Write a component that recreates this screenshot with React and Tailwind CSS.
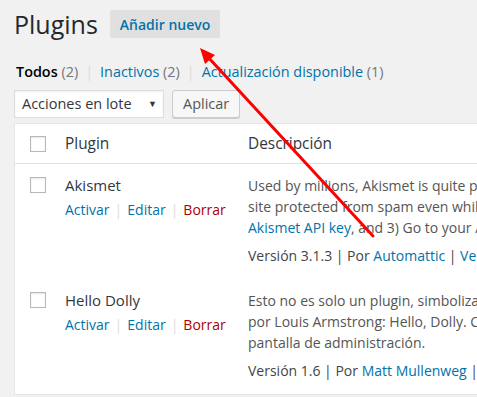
import { useState } from 'react';

const font = { fontFamily: '"Open Sans", "Noto Sans", sans-serif' };

function Checkbox() {
  return <span className="block h-4 w-4 border border-[#b4b9be] bg-white shadow-[inset_0_1px_2px_rgba(0,0,0,0.1)]" />;
}

const Sep = ({ wide }) => <span className={`${wide ? 'mx-[7px]' : 'mx-[5px]'} text-[#ddd]`}>|</span>;

function PluginRow({ name, desc, version, author }) {
  return (
    <div className="flex h-[115px]">
      <div className="w-[50px] shrink-0 pl-[15px] pt-[13px]">
        <Checkbox />
      </div>
      <div className="w-[183px] shrink-0 pt-[11px]">
        <div className="text-[15px] leading-[21px] text-[#32373c]">{name}</div>
        <div className="pt-[3px] text-[14px] leading-[21px]">
          <span className="text-[#0073aa]">Activar</span>
          <Sep />
          <span className="text-[#0073aa]">Editar</span>
          <Sep />
          <span className="text-[#a00]">Borrar</span>
        </div>
      </div>
      <div className="pt-[11px] text-[14px] leading-[21px] text-[#555] whitespace-nowrap">
        {desc}
        <div className="mt-[7px] text-[#444]">
          Versión {version} | Por <span className="text-[#0073aa]">{author}</span> |{' '}
          <span className="text-[#0073aa]">Ver detalles</span>
        </div>
      </div>
    </div>
  );
}

export default function App() {
  const [sel] = useState('Acciones en lote');

  return (
    <div className="relative h-[397px] w-[477px] overflow-hidden bg-[#f1f1f1] pl-[14px]" style={font}>
      {/* heading */}
      <div className="flex items-center gap-[12px] pt-[10px]">
        <h1 className="text-[25px] leading-[27px] text-[#23282d]">Plugins</h1>
        <span className="flex h-[28px] items-center bg-[#e0e0e0] px-[10px] text-[14px] font-semibold text-[#0073aa]">
          Añadir nuevo
        </span>
      </div>

      {/* filters */}
      <div className="mt-[24px] whitespace-nowrap pl-[2px] text-[14.4px] leading-[20px] text-[#555]">
        <span className="font-semibold text-[#000]">Todos</span> <span className="text-[#72777c]">(2)</span>
        <Sep wide />
        <span className="text-[#0073aa]">Inactivos</span> <span className="text-[#72777c]">(2)</span>
        <Sep wide />
        <span className="text-[#0073aa]">Actualización disponible</span> <span className="text-[#72777c]">(1)</span>
      </div>

      {/* bulk actions */}
      <div className="mt-[8px] flex gap-[8px]">
        <div className="flex h-[28px] w-[150px] items-center justify-between border border-[#ddd] bg-white pl-[7px] pr-[6px] text-[14.5px] text-[#32373c] shadow-[inset_0_1px_2px_rgba(0,0,0,0.07)]">
          <span>{sel}</span>
          <span className="text-[9px]">▼</span>
        </div>
        <div className="flex h-[28px] items-center rounded-[3px] border border-[#ccc] bg-[#f7f7f7] px-[10px] text-[14.5px] text-[#555] shadow-[0_1px_0_#ccc]">
          Aplicar
        </div>
      </div>

      {/* table */}
      <div className="mt-[5px] w-[800px] border border-[#e5e5e5] bg-white">
        <div className="flex h-[40px] items-center border-b border-[#e1e1e1] text-[15.4px] text-[#32373c]">
          <div className="w-[50px] shrink-0 pl-[15px]">
            <Checkbox />
          </div>
          <div className="w-[183px] shrink-0">Plugin</div>
          <div>Descripción</div>
        </div>
        <PluginRow
          name="Akismet"
          version="3.1.3"
          author="Automattic"
          desc={
            <>
              <div>Used by millions, Akismet is quite possibly the best way in the world to protect your blog from spam.</div>
              <div>site protected from spam even while you sleep. To get started: 1) Click the "Activate" link to the left</div>
              <div>
                <span className="text-[#0073aa]">Akismet API key</span>, and 3) Go to your Akismet configuration page, and save your API key.
              </div>
            </>
          }
        />
        <PluginRow
          name="Hello Dolly"
          version="1.6"
          author="Matt Mullenweg"
          desc={
            <>
              <div>Esto no es solo un plugin, simboliza la esperanza y el entusiasmo de toda una generación resumidos</div>
              <div>por Louis Armstrong: Hello, Dolly. Cuando lo actives verás aleatoriamente una frase de Hello, Dolly</div>
              <div>pantalla de administración.</div>
            </>
          }
        />
      </div>

      {/* red annotation arrow */}
      <svg className="pointer-events-none absolute left-0 top-0" width="477" height="397" viewBox="0 0 477 397">
        <line x1="373" y1="236" x2="207" y2="56" stroke="#f00" strokeWidth="3" strokeLinecap="round" />
        <polygon points="200,48 215,55 205,64" fill="#f00" />
      </svg>
    </div>
  );
}
